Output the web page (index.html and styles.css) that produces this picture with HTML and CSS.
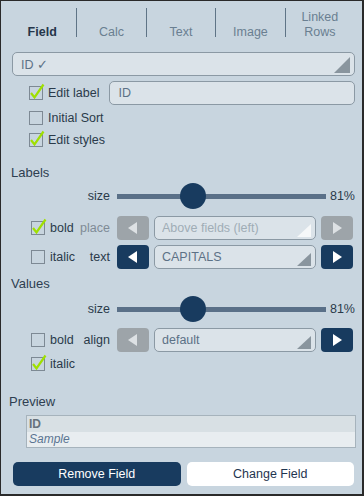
FILE: index.html
```html
<!DOCTYPE html>
<html>
<head>
<meta charset="utf-8">
<link rel="stylesheet" href="styles.css">
</head>
<body>
<div class="panel">
  <div class="tabs">
    <div class="tab active"><span>Field</span></div>
    <div class="tab"><span>Calc</span></div>
    <div class="tab"><span>Text</span></div>
    <div class="tab"><span>Image</span></div>
    <div class="tab"><span>Linked<br>Rows</span></div>
  </div>

  <div class="select field-select">
    <span class="sel-text">ID ✓</span>
    <svg class="tri big" viewBox="0 0 16 16"><polygon points="16,0 16,16 0,16"/></svg>
  </div>

  <div class="row edit-row">
    <svg class="cb" viewBox="0 0 14 14"><rect x="0.5" y="0.5" width="13" height="13"/><polyline points="2,7 5.5,11.5 14.5,-1.5"/></svg>
    <span class="cb-label">Edit label</span>
    <div class="input">ID</div>
  </div>
  <div class="row check-row">
    <svg class="cb" viewBox="0 0 14 14"><rect x="0.5" y="0.5" width="13" height="13"/></svg>
    <span class="cb-label">Initial Sort</span>
  </div>
  <div class="row check-row">
    <svg class="cb" viewBox="0 0 14 14"><rect x="0.5" y="0.5" width="13" height="13"/><polyline points="2,7 5.5,11.5 14.5,-1.5"/></svg>
    <span class="cb-label">Edit styles</span>
  </div>

  <div class="section-title labels-title">Labels</div>
  <div class="slider-row first-slider">
    <span class="side-lbl">size</span>
    <div class="track"><div class="thumb" style="left:36.4%"></div></div>
    <span class="pct">81%</span>
  </div>
  <div class="ctl-row bold-row">
    <div class="left">
      <svg class="cb" viewBox="0 0 14 14"><rect x="0.5" y="0.5" width="13" height="13"/><polyline points="2,7 5.5,11.5 14.5,-1.5"/></svg>
      <span class="cb-label">bold</span>
      <span class="side-lbl muted">place</span>
    </div>
    <div class="btn disabled"><svg viewBox="0 0 10 12"><polygon points="9,0 9,12 0,6"/></svg></div>
    <div class="select small disabled-sel">
      <span class="sel-text">Above fields (left)</span>
      <svg class="tri" viewBox="0 0 14 13"><polygon points="14,0 14,13 0,13"/></svg>
    </div>
    <div class="btn disabled"><svg viewBox="0 0 10 12"><polygon points="1,0 1,12 10,6"/></svg></div>
  </div>
  <div class="ctl-row italic-row">
    <div class="left">
      <svg class="cb" viewBox="0 0 14 14"><rect x="0.5" y="0.5" width="13" height="13"/></svg>
      <span class="cb-label">italic</span>
      <span class="side-lbl">text</span>
    </div>
    <div class="btn"><svg viewBox="0 0 10 12"><polygon points="9,0 9,12 0,6"/></svg></div>
    <div class="select small">
      <span class="sel-text">CAPITALS</span>
      <svg class="tri" viewBox="0 0 14 13"><polygon points="14,0 14,13 0,13"/></svg>
    </div>
    <div class="btn"><svg viewBox="0 0 10 12"><polygon points="1,0 1,12 10,6"/></svg></div>
  </div>

  <div class="section-title values-title">Values</div>
  <div class="slider-row second-slider">
    <span class="side-lbl">size</span>
    <div class="track"><div class="thumb" style="left:36.4%"></div></div>
    <span class="pct">81%</span>
  </div>
  <div class="ctl-row align-row">
    <div class="left">
      <svg class="cb" viewBox="0 0 14 14"><rect x="0.5" y="0.5" width="13" height="13"/></svg>
      <span class="cb-label">bold</span>
      <span class="side-lbl">align</span>
    </div>
    <div class="btn disabled"><svg viewBox="0 0 10 12"><polygon points="9,0 9,12 0,6"/></svg></div>
    <div class="select small">
      <span class="sel-text">default</span>
      <svg class="tri" viewBox="0 0 14 13"><polygon points="14,0 14,13 0,13"/></svg>
    </div>
    <div class="btn"><svg viewBox="0 0 10 12"><polygon points="1,0 1,12 10,6"/></svg></div>
  </div>
  <div class="ctl-row values-italic">
    <div class="left">
      <svg class="cb" viewBox="0 0 14 14"><rect x="0.5" y="0.5" width="13" height="13"/><polyline points="2,7 5.5,11.5 14.5,-1.5"/></svg>
      <span class="cb-label">italic</span>
    </div>
  </div>

  <div class="section-title preview-title">Preview</div>
  <div class="preview">
    <div class="pv-label">ID</div>
    <div class="pv-value">Sample</div>
  </div>

  <div class="actions">
    <div class="action remove">Remove Field</div>
    <div class="action change">Change Field</div>
  </div>
</div>
</body>
</html>
```

FILE: styles.css
```css
* { box-sizing: border-box; }
html, body { margin: 0; padding: 0; }
body {
  font-family: "Liberation Sans", Arial, sans-serif;
  font-size: 12.5px;
  color: #2a3a4a;
  background: #c8d5df;
}
.panel {
  width: 364px;
  height: 496px;
  background: #c8d5df;
  border-top: 1px solid #2a2a2a;
  border-left: 1px solid #2a2a2a;
  border-right: 2px solid #2a2a2a;
  border-bottom: 2px solid #2a2a2a;
  padding: 0 7px 0 11px;
  display: flex;
  flex-direction: column;
}

/* tabs */
.tabs {
  display: flex;
  margin: 7px 1px 0 -4px;
  height: 29px;
}
.tab {
  flex: 1;
  display: flex;
  align-items: flex-end;
  justify-content: center;
  text-align: center;
  color: #6a7f91;
  font-size: 12.5px;
  line-height: 15px;
  border-left: 1px solid #5f7486;
}
.tab:first-child { border-left: none; }
.tab span { margin-bottom: -3px; }
.tab.active { font-weight: bold; color: #25364a; }

/* selects / inputs */
.select {
  display: flex;
  align-items: center;
  background: #dbe3e9;
  border: 1px solid #8b99a4;
  border-radius: 5px;
  height: 24px;
  padding: 0 4px 0 8px;
  color: #5c7186;
}
.sel-text { flex: 1; white-space: nowrap; overflow: hidden; }
.field-select { margin-top: 15px; padding-left: 8px; align-items: center; }
.tri { fill: #89959e; display: block; }
.tri.big { width: 16px; height: 16px; margin-top: 2px; }
.select.small .tri { width: 14px; height: 13px; margin-top: 4px; }
.select.small { flex: 0 0 162px; margin-left: 5px; padding-left: 7px; }
.disabled-sel { color: #a0adb6; }
.disabled-sel .tri { fill: #f6f8f9; }

.input {
  flex: 1;
  height: 24px;
  background: #dbe3e9;
  border: 1px solid #8b99a4;
  border-radius: 5px;
  padding: 0 8px;
  display: flex;
  align-items: center;
  color: #5c7186;
  margin-left: 10px;
}

/* checkbox rows */
.row { display: flex; align-items: center; }
.edit-row { margin-top: 5px; height: 24px; padding-left: 17px; }
.check-row { height: 22px; padding-left: 17px; }
.edit-row + .check-row { margin-top: 2px; }
.cb {
  width: 14px;
  height: 14px;
  flex: 0 0 14px;
  overflow: visible;
  display: block;
}
.cb rect { fill: none; stroke: #7d8994; stroke-width: 1; }
.cb polyline { fill: none; stroke: #9fe000; stroke-width: 2.2; stroke-linejoin: miter; stroke-linecap: butt; }
.cb-label { margin-left: 5px; color: #2a3a4a; }

.section-title { line-height: 15px; height: 15px; color: #2e3e50; font-size: 13px; }
.labels-title { margin-top: 14px; margin-left: -1px; }
.values-title { margin-top: 7px; margin-left: -1px; }
.preview-title { margin-top: 19px; margin-left: -3px; }

/* sliders */
.slider-row { display: flex; align-items: center; height: 26px; }
.first-slider { margin-top: 3px; }
.second-slider { margin-top: 5px; }
.side-lbl { text-align: right; }
.slider-row .side-lbl { width: 98px; }
.track {
  position: relative;
  margin-left: 7px;
  width: 209px;
  height: 5px;
  background: #5a7088;
}
.thumb {
  position: absolute;
  top: 50%;
  width: 26px;
  height: 26px;
  margin: -13px 0 0 -13px;
  border-radius: 50%;
  background: #183b5f;
}
.pct { flex: 1; text-align: right; color: #2a3a4a; }

/* control rows */
.ctl-row { display: flex; align-items: center; height: 24px; }
.bold-row { margin-top: 7px; }
.italic-row { margin-top: 5px; }
.align-row { margin-top: 6px; }
.values-italic { margin-top: 1px; height: 22px; }
.left {
  width: 98px;
  flex: 0 0 98px;
  display: flex;
  align-items: center;
  padding-left: 19px;
}
.left .side-lbl { margin-left: auto; }
.muted { color: #7f8b96; }
.btn {
  flex: 0 0 32px;
  width: 32px;
  height: 24px;
  border-radius: 4px;
  background: #183b5f;
  display: flex;
  align-items: center;
  justify-content: center;
}
.left + .btn { margin-left: 7px; }
.select + .btn { margin-left: 5px; }
.btn svg { width: 10px; height: 12px; fill: #ffffff; display: block; }
.btn.disabled { background: #9da4a9; }
.btn.disabled svg { fill: #dde1e4; }

/* preview */
.preview {
  margin: 6px -1px 0 14px;
  border: 1px solid #a6b3bc;
  height: 33px;
  display: flex;
  flex-direction: column;
}
.pv-label {
  height: 16px;
  background: #d8e0e4;
  font-size: 12px;
  font-weight: bold;
  color: #66727c;
  padding-left: 2px;
  line-height: 16px;
}
.pv-value {
  flex: 1;
  background: #e8edf0;
  font-size: 12px;
  font-style: italic;
  color: #5b7592;
  padding-left: 2px;
  line-height: 15px;
}

/* actions */
.actions {
  display: flex;
  gap: 6px;
  margin: 14px 1px 0 1px;
}
.action {
  flex: 1;
  height: 24px;
  border-radius: 5px;
  display: flex;
  align-items: center;
  justify-content: center;
  font-size: 12.5px;
}
.remove { background: #183b5f; color: #ffffff; }
.change { background: #ffffff; color: #1f3550; }
```
